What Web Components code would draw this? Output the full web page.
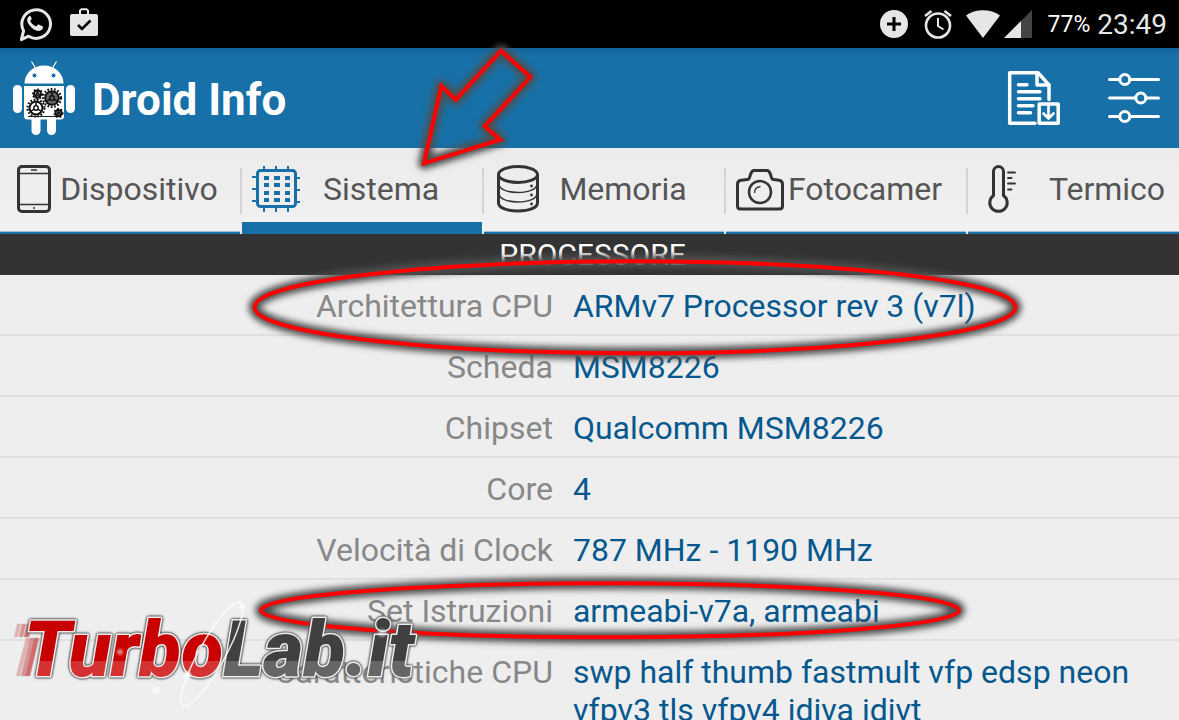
<!DOCTYPE html>
<html lang="it">
<head>
<meta charset="utf-8">
<meta name="viewport" content="width=device-width, initial-scale=1">
<title>Droid Info</title>
<style>
	html, body {
		height: 100%;
		margin: 0;
	}
	body {
		position: relative;
		display: flex;
		flex-direction: column;
		overflow: hidden;
		background: #eee;
		font-family: Roboto, "Liberation Sans", sans-serif;
	}
	svg {
		display: block;
		flex: none;
	}
</style>
</head>
<body>
<status-bar battery="77%" time="23:49"></status-bar>

<app-bar heading="Droid Info"></app-bar>

<tab-strip>
	<tab-item label="Dispositivo">
		<svg width="48" height="48" viewBox="10 165 48 48" fill="none" stroke="currentColor">
			<rect x="18.5" y="166.500" width="31" height="45" rx="3.500" stroke-width="3"/>
			<path d="M19 173.500h30M19 204.500h30" stroke-width="1.500"/>
			<path d="M31 170h6M33 208h2" stroke-width="1.500"/>
		</svg>
	</tab-item>
	<tab-item label="Sistema" selected>
		<svg width="48" height="48" viewBox="252 165 48 48" fill="none" stroke="#1770a7">
			<rect x="257.500" y="170.500" width="38" height="36" rx="3" stroke-width="3"/>
			<path d="M264 166v4M276 166v4M288 166v4M264 208v4M276 208v4M288 208v4M252 177h4M252 189h4M252 201h4M297 178h3M297 190h3M297 202h3" stroke-width="2"/>
			<path d="M264 178h5m5 0h6m5 0h5M264 185h5m5 0h6m5 0h5M264 193h5m5 0h6m5 0h5M264 200h5m5 0h6m5 0h5" stroke-width="4"/>
		</svg>
	</tab-item>
	<tab-item label="Memoria">
		<svg width="48" height="48" viewBox="494 165 48 48" fill="none" stroke="currentColor">
			<ellipse cx="518" cy="174.500" rx="19.500" ry="8" stroke-width="3"/>
			<path d="M498.500 174v29c0 4.500 8 8 19.500 8s19.500-3.500 19.500-8v-29" stroke-width="3"/>
			<path d="M499 184c0 5 8 8.500 19 8.500s19-3.500 19-8.500M499 193.500c0 5 8 8.500 19 8.500s19-3.500 19-8.500" stroke-width="1.500"/>
			<g fill="currentColor" stroke="none"><circle cx="531.500" cy="186" r="1.400"/><circle cx="531.500" cy="195" r="1.400"/><circle cx="531.500" cy="204" r="1.400"/></g>
		</svg>
	</tab-item>
	<tab-item label="Fotocamer">
		<svg width="48" height="48" viewBox="736 165 48 48" fill="none" stroke="currentColor" stroke-linejoin="round">
			<path d="M747.500 179.500c2 0 2-2 3-5 .7-2.200 1.500-4 3.500-4h13c2 0 2.800 1.800 3.500 4 1 3 1 5 3 5l5.500.7c2.500.3 3.500 1.800 3.500 4V206c0 2-1 3-3 3h-39c-2 0-3-1-3-3v-21.800c0-2.200 1-3.700 3.500-4z" stroke-width="3"/>
			<circle cx="760" cy="192" r="11" stroke-width="2.500"/>
			<path d="M754.500 193c0-3.500 2-6 6-6.500" stroke-width="1.300"/>
		</svg>
	</tab-item>
	<tab-item label="Termico">
		<svg width="48" height="48" viewBox="978 165 48 48" fill="none" stroke="currentColor">
			<path d="M993.500 195.500V171.500a5 5 0 0 1 10 0v24a8.700 8.700 0 1 1-10 0z" stroke-width="3"/>
			<path d="M1008 172.500h7M1008 178h3.500M1008 183.500h7M1008 189.500h3.500" stroke-width="1.800" stroke-linecap="round"/>
		</svg>
	</tab-item>
</tab-strip>

<info-section heading="PROCESSORE">
	<info-row label="Architettura CPU">ARMv7 Processor rev 3 (v7l)</info-row>
	<info-row label="Scheda">MSM8226</info-row>
	<info-row label="Chipset">Qualcomm MSM8226</info-row>
	<info-row label="Core">4</info-row>
	<info-row label="Velocità di Clock">787 MHz - 1190 MHz</info-row>
	<info-row label="Set Istruzioni">armeabi-v7a, armeabi</info-row>
	<info-row label="Caratteristiche CPU">swp half thumb fastmult vfp edsp neon vfpv3 tls vfpv4 idiva idivt</info-row>
</info-section>

<ink-layer></ink-layer>
<brand-mark></brand-mark>

<script>
// status-bar
class StatusBar extends HTMLElement {
	constructor() {
		super();
		this.attachShadow({ mode: 'open' });
		this.render();
	}

	render() {
		this.shadowRoot.innerHTML = `
			<style>
				:host {
					display: flex;
					flex: none;
					justify-content: space-between;
					box-sizing: border-box;
					height: 48px;
					padding: 0 12px 0 20px;
					background: #000;
					color: #e6e6e6;
				}
				svg {
					display: block;
					flex: none;
				}
				div {
					display: flex;
					align-items: center;
				}
				.left {
					gap: 18px;
				}
				.battery {
					margin-left: 14px;
					font-size: 23px;
					color: #fff;
				}
				.time {
					margin-left: 7px;
					font-size: 28px;
				}
			</style>
			<div class="left">
				<svg width="32" height="48" viewBox="21 0 32 48" fill="none" stroke="currentColor">
					<path d="M22.300 39.600l2.300-8.700a14.300 14.300 0 1 1 5 5.300z" stroke-width="3" stroke-linejoin="round"/>
					<path d="M30.700 15.800c-3.800 2.500-3 6 0 9.800 3.500 4.600 8.200 6.600 11.600 4.500 1.600-1 2-2.500 1.500-3.600l-4-2c-.7-.3-1 0-1.300.4l-1.300 1.600c-2.600-.9-5-3-6-5.500l1.200-1.500c.4-.5.300-.9.100-1.400l-1.300-2.300z" fill="currentColor" stroke="none"/>
				</svg>
				<svg width="28" height="48" viewBox="70 0 28 48" fill="none" stroke="currentColor">
					<rect x="70" y="14" width="28" height="22" rx="2" fill="currentColor" stroke="none"/>
					<path d="M80 15v-4.500l1.500-1.200h5l1.500 1.200V15" stroke-width="2"/>
					<path d="M78 25l4 4 8.500-8.500" stroke="#000" stroke-width="2.600"/>
				</svg>
			</div>
			<div class="right">
				<svg width="28" height="48" viewBox="880 0 28 48">
					<circle cx="894" cy="24" r="14" fill="currentColor"/>
					<path d="M887 24h14M894 17v14" stroke="#000" stroke-width="3"/>
				</svg>
				<svg width="58" height="48" viewBox="908 0 58 48" fill="none" stroke="currentColor" stroke-width="2.600">
					<circle cx="938" cy="25.500" r="12"/>
					<path d="M938 18v8l5.500 3.500" stroke-width="2"/>
					<path d="M925 16l6.500-5M951 16l-6.500-5"/>
				</svg>
				<svg width="68" height="48" viewBox="966 0 68 48" fill="currentColor">
					<path d="M983 38L966 15.500C975 8.500 991 8.500 1000 15.500z"/>
					<path d="M1032 38V10L1004 38z" fill="#444"/>
					<path d="M1021 38V21L1004 38z"/>
				</svg>
				<span class="battery">${this.getAttribute('battery')}</span>
				<span class="time">${this.getAttribute('time')}</span>
			</div>
		`;
	}
}

// app-bar
class AppBar extends HTMLElement {
	constructor() {
		super();
		this.attachShadow({ mode: 'open' });
		this.render();
	}

	// toothed wheel: dashed ring for the teeth, solid ring, hub
	gear(x, y, r) {
		return `
			<g fill="none" stroke="#111">
				<circle cx="${x}" cy="${y}" r="${r}" stroke-width="2.200" stroke-dasharray="1.700 1.700"/>
				<circle cx="${x}" cy="${y}" r="${r * 0.76}" stroke-width="2"/>
				<circle cx="${x}" cy="${y}" r="${r * 0.26}" stroke-width="1.500"/>
				<path d="M${x} ${y - r * 0.3}v${-r * 0.45}M${x + r * 0.26} ${y + r * 0.15}l${r * 0.4} ${r * 0.25}M${x - r * 0.26} ${y + r * 0.15}l${-r * 0.4} ${r * 0.25}" stroke-width="1.500"/>
			</g>`;
	}

	render() {
		this.shadowRoot.innerHTML = `
			<style>
				:host {
					display: flex;
					flex: none;
					align-items: center;
					box-sizing: border-box;
					height: 100px;
					padding: 0 12px;
					background: linear-gradient(#14649a, #1770a7 8px);
					color: #fff;
				}
				svg {
					display: block;
				}
				h1 {
					flex: 1;
					margin: 0 0 0 16px;
					font-size: 44px;
					font-weight: 700;
					line-height: 52px;
					padding-top: 4px;
				}
				button {
					padding: 0;
					border: 0;
					background: none;
					color: inherit;
					cursor: pointer;
				}
				nav {
					display: flex;
					gap: 40px;
				}
			</style>
			<svg width="64" height="76" viewBox="12 60 64 76" fill="#fff">
				<path d="M24.500 83.500c0-10 8.500-18 19.500-18s19.500 8 19.500 18z"/>
				<path d="M31.500 61.500l4 6.500M56.500 61.500l-4 6.500" stroke="#fff" stroke-width="1.200"/>
				<circle cx="34.500" cy="75.500" r="2" fill="#1770a7"/>
				<circle cx="53.500" cy="75.500" r="2" fill="#1770a7"/>
				<rect x="13" y="85" width="9" height="28" rx="4.500"/>
				<rect x="66" y="85" width="9" height="28" rx="4.500"/>
				<path d="M24 86h40v30a3.500 3.500 0 0 1-3.500 3.500H27.500A3.500 3.500 0 0 1 24 116z"/>
				<rect x="31.500" y="110" width="9" height="25" rx="4.500"/>
				<rect x="47" y="110" width="9" height="25" rx="4.500"/>
				<circle cx="52" cy="98" r="7" fill="#666"/>
				${this.gear(52, 98, 9)}
				${this.gear(36, 108, 8.5)}
				${this.gear(37.5, 94, 4.5)}
				${this.gear(58.5, 113, 4)}
				<path d="M28 116.500h29" stroke="#222" stroke-width="1"/>
			</svg>
			<h1>${this.getAttribute('heading')}</h1>
			<nav>
				<button type="button" aria-label="Esporta">
					<svg width="64" height="60" viewBox="999 68 64 60" fill="none" stroke="currentColor" stroke-width="3.500" stroke-linejoin="round" stroke-linecap="round">
						<path d="M1035 123.200h-25.300V72.700H1038l11 12.300v14.500"/>
						<path d="M1037 73v12h12"/>
						<path d="M1018.500 84.800h8.500M1018.500 91.800h21.500M1018.500 98.800h21.500M1018.500 105.800h14.500M1018.500 112.800h12"/>
						<path d="M1039.200 104h19v19.200h-19z"/>
						<path d="M1048.500 106v12M1043.500 113.500l5 5 5-5" stroke-width="2.600"/>
					</svg>
				</button>
				<button type="button" aria-label="Impostazioni">
					<svg width="64" height="60" viewBox="1103 68 64 60" fill="none" stroke="currentColor" stroke-width="3" stroke-linecap="round">
						<path d="M1109.500 79.500h10M1130 79.500h28.500M1109.500 98h26M1146 98h12.500M1109.500 116.500h10M1130 116.500h28.500"/>
						<circle cx="1124.800" cy="79.500" r="5"/>
						<circle cx="1140.800" cy="98" r="5"/>
						<circle cx="1124.800" cy="116.500" r="5"/>
					</svg>
				</button>
			</nav>
		`;
	}
}

// tab-strip, scrolls sideways when the tabs do not fit
class TabStrip extends HTMLElement {
	constructor() {
		super();
		this.attachShadow({ mode: 'open' });
		this.shadowRoot.innerHTML = `
			<style>
				:host {
					display: block;
					flex: none;
					background: linear-gradient(#ebebeb, #f1f1f1);
				}
				div {
					display: flex;
					overflow-x: auto;
					scrollbar-width: none;
				}
			</style>
			<div role="tablist"><slot></slot></div>
		`;
	}
}

class TabItem extends HTMLElement {
	constructor() {
		super();
		this.attachShadow({ mode: 'open' });
		this.render();
	}

	connectedCallback() {
		this.addEventListener('click', () => {
			this.parentElement
				.querySelectorAll('tab-item')
				.forEach((tab) => tab.toggleAttribute('selected', tab === this));
		});
	}

	render() {
		this.shadowRoot.innerHTML = `
			<style>
				:host {
					display: block;
					flex: none;
					width: 242px;
					background: linear-gradient(#d4d4d4, #d4d4d4) right 20px / 2px 46px no-repeat;
				}
				button {
					display: flex;
					align-items: center;
					box-sizing: border-box;
					width: 240px;
					height: 86px;
					padding: 0 20px 4px 10px;
					border: 0;
					background: linear-gradient(#9fc0d6 1px, #1770a7 1px) bottom / 100% 3px no-repeat;
					color: #333;
					font-family: inherit;
					font-size: 32px;
					cursor: pointer;
				}
				:host([selected]) button {
					background-image: linear-gradient(#1770a7, #1770a7);
					background-size: 100% 12px;
				}
				span {
					flex: 1;
					color: #555;
					text-align: center;
					white-space: nowrap;
				}
			</style>
			<button type="button" role="tab"><slot></slot><span>${this.getAttribute('label')}</span></button>
		`;
	}
}

// info-section builds a table out of its info-row children
class InfoSection extends HTMLElement {
	constructor() {
		super();
		this.attachShadow({ mode: 'open' });
		this.render();
	}

	render() {
		const rows = Array.from(this.querySelectorAll('info-row'));

		this.shadowRoot.innerHTML = `
			<style>
				:host {
					display: block;
					flex: 1;
					min-height: 0;
					overflow: hidden;
				}
				h2 {
					margin: 0;
					padding-left: 6px;
					background: #333;
					color: #fff;
					font-size: 30px;
					font-weight: 400;
					line-height: 41px;
					text-align: center;
				}
				table {
					width: 100%;
					border-collapse: collapse;
					font-size: 32px;
					line-height: 38px;
				}
				tr {
					border-bottom: 2px solid #e0e0e0;
				}
				th, td {
					vertical-align: top;
					font-weight: 400;
				}
				th {
					width: 48%;
					padding: 12px 13px 9px 0;
					box-sizing: border-box;
					color: #888;
					text-align: right;
					white-space: nowrap;
				}
				td {
					padding: 12px 0 9px 7px;
					color: #05588e;
				}
			</style>
			<h2>${this.getAttribute('heading')}</h2>
			<table>
				${rows
					.map(
						(row) => `
						<tr>
							<th scope="row">${row.getAttribute('label')}</th>
							<td>${row.innerHTML}</td>
						</tr>`
					)
					.join('')}
			</table>
		`;
	}
}

// ink-layer: red pen marks with a soft dark halo
class InkLayer extends HTMLElement {
	constructor() {
		super();
		this.attachShadow({ mode: 'open' });
		this.shadowRoot.innerHTML = `
			<style>
				:host {
					position: absolute;
					top: 0;
					left: 0;
					pointer-events: none;
				}
				svg {
					display: block;
				}
			</style>
			<svg width="1179" height="720" viewBox="0 0 1179 720" fill="none" aria-hidden="true">
				<defs>
					<filter id="soft" filterUnits="userSpaceOnUse" x="0" y="0" width="1179" height="720">
						<feGaussianBlur stdDeviation="3"/>
					</filter>
					<g id="marks">
						<path d="M501 50.700L530.300 77 484.700 126.300 500.300 139.700 424 163.300 441.300 86 455.700 99.700z"/>
						<ellipse cx="635" cy="307.300" rx="380.500" ry="46"/>
						<ellipse cx="610" cy="610.300" rx="349" ry="27"/>
					</g>
				</defs>
				<use href="#marks" stroke="#505050" stroke-width="12" stroke-linejoin="round" filter="url(#soft)"/>
				<use href="#marks" stroke="#f00" stroke-width="4"/>
			</svg>
		`;
	}
}

// brand-mark: site logo over the bottom left corner
class BrandMark extends HTMLElement {
	constructor() {
		super();
		this.attachShadow({ mode: 'open' });
		this.shadowRoot.innerHTML = `
			<style>
				:host {
					position: absolute;
					left: 0;
					bottom: 0;
					pointer-events: none;
				}
				svg {
					display: block;
				}
				text {
					font-family: Roboto, "Liberation Sans", sans-serif;
					font-size: 77px;
					font-weight: 900;
					font-style: italic;
					paint-order: stroke;
					stroke: #eee;
					stroke-width: 3px;
					stroke-linejoin: round;
					filter: drop-shadow(0 0 1px #222) drop-shadow(0 0 1px #777);
				}
			</style>
			<svg width="440" height="130" viewBox="0 590 440 130">
				<defs>
					<linearGradient id="red" gradientUnits="userSpaceOnUse" x1="0" y1="620" x2="0" y2="680">
						<stop offset=".68" stop-color="#c80000"/>
						<stop offset=".68" stop-color="#d43232"/>
					</linearGradient>
					<linearGradient id="grey" gradientUnits="userSpaceOnUse" x1="0" y1="620" x2="0" y2="680">
						<stop offset=".68" stop-color="#404040"/>
						<stop offset=".68" stop-color="#666"/>
					</linearGradient>
					<filter id="glow" x="-1" y="-1" width="3" height="3">
						<feGaussianBlur stdDeviation="1"/>
					</filter>
				</defs>
				<!-- speed stripes left of the name -->
				<g fill="#d04040" stroke="#999" stroke-width=".5">
					<path d="M17 624h4l-3 13h-4zM26 638h4l-10 38h-4z" opacity=".35"/>
					<path d="M22 624h4l-3 13h-4zM30 638h4l-9 38h-4z" opacity=".55"/>
					<path d="M27 624h5l-3 13h-5zM34 638h5l-9 38h-5z" opacity=".75"/>
				</g>
				<text x="24" y="676" fill="url(#red)">Turbo<tspan fill="url(#grey)">Lab.it</tspan></text>
				<ellipse cx="212" cy="654" rx="13" ry="59" transform="rotate(29 212 654)" fill="none" stroke="#fff" stroke-width="1.500" opacity=".85"/>
				<g fill="#fff" filter="url(#glow)">
					<circle cx="242" cy="606" r="2.500"/>
					<circle cx="187" cy="675" r="3.500"/>
					<circle cx="156" cy="690" r="4" opacity=".6"/>
					<circle cx="120" cy="652" r="3" opacity=".5"/>
					<circle cx="382" cy="633" r="4" opacity=".5"/>
				</g>
			</svg>
		`;
	}
}

customElements.define('status-bar', StatusBar);
customElements.define('app-bar', AppBar);
customElements.define('tab-strip', TabStrip);
customElements.define('tab-item', TabItem);
customElements.define('info-section', InfoSection);
customElements.define('ink-layer', InkLayer);
customElements.define('brand-mark', BrandMark);
</script>
</body>
</html>
